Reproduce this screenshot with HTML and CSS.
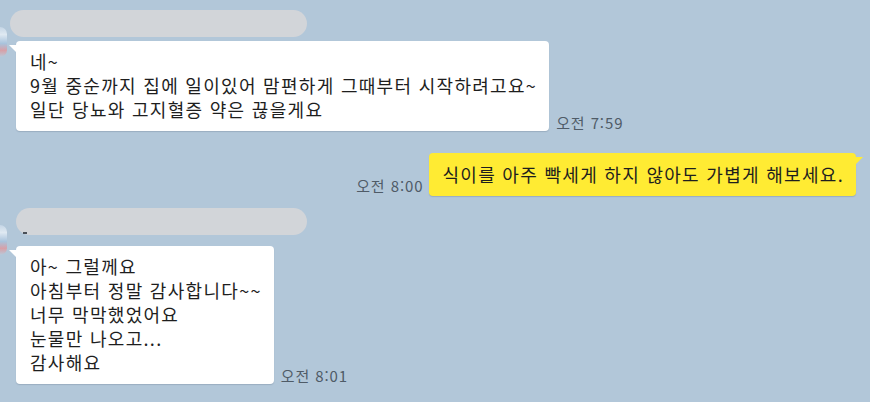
FILE: index.html
```html
<!DOCTYPE html>
<html lang="ko">
<head>
<meta charset="utf-8">
<link rel="stylesheet" href="styles.css">
</head>
<body>
<div class="chat">
  <div class="msg-in">
    <div class="avatar"></div>
    <div class="content">
      <div class="name name-first"></div>
      <div class="row">
        <div class="bubble bubble-in">네~<br>9월 중순까지 집에 일이있어 맘편하게 그때부터 시작하려고요~<br>일단 당뇨와 고지혈증 약은 끊을게요</div>
        <span class="time">오전 7:59</span>
      </div>
    </div>
  </div>

  <div class="msg-out">
    <span class="time">오전 8:00</span>
    <div class="bubble bubble-out">식이를 아주 빡세게 하지 않아도 가볍게 해보세요.</div>
  </div>

  <div class="msg-in msg-second">
    <div class="avatar"></div>
    <div class="content">
      <div class="name name-second"><span class="name-dash"></span></div>
      <div class="row">
        <div class="bubble bubble-in">아~ 그럴께요<br>아침부터 정말 감사합니다~~<br>너무 막막했었어요<br>눈물만 나오고...<br>감사해요</div>
        <span class="time">오전 8:01</span>
      </div>
    </div>
  </div>
</div>
</body>
</html>
```
FILE: styles.css
```css
html, body {
  margin: 0;
  padding: 0;
  background: #b2c7d9;
}
body {
  width: 870px;
  height: 402px;
  overflow: hidden;
  font-family: "Noto Sans CJK KR", "Noto Sans", sans-serif;
  color: #1e1e1e;
}
.chat {
  display: flex;
  flex-direction: column;
  padding-top: 10px;
}
.msg-in {
  display: flex;
  align-items: flex-start;
}
.msg-second {
  margin-top: 12px;
}
.avatar {
  width: 7px;
  height: 30px;
  margin-top: 17px;
  border-radius: 0 8px 8px 0;
  background: linear-gradient(180deg, #c5d6e6 0%, #dfe9f2 25%, #a9c3dc 55%, #d7a0a8 78%, #b9c9d9 100%);
  flex: none;
}
.content {
  display: flex;
  flex-direction: column;
  margin-left: 9px;
}
.name {
  height: 27px;
  border-radius: 14px;
  background: #d2d5d9;
  position: relative;
}
.name-first {
  width: 297px;
  margin-left: -6px;
}
.name-second {
  width: 291px;
}
.name-dash {
  position: absolute;
  left: 7px;
  bottom: 1px;
  width: 4px;
  height: 2px;
  background: #4a5058;
}
.row {
  display: flex;
  align-items: flex-end;
  margin-top: 4px;
}
.msg-second .row {
  margin-top: 11px;
}
.bubble {
  position: relative;
  font-size: 18px;
  letter-spacing: 1.3px;
  line-height: 24px;
  border-radius: 4px;
  white-space: nowrap;
}
.bubble-in {
  background: #ffffff;
  padding: 8px 12px 10px 14px;
  box-shadow: 0 1px 1px rgba(80, 100, 120, 0.25);
}
.bubble-in::before {
  content: "";
  position: absolute;
  left: -7px;
  top: 4px;
  width: 8px;
  height: 8px;
  background: #ffffff;
  clip-path: polygon(0 0, 100% 0, 100% 100%);
}
.time {
  font-size: 15px;
  letter-spacing: 0.9px;
  line-height: 17px;
  color: #4f5b67;
  margin-left: 7px;
  white-space: nowrap;
}
.msg-out {
  display: flex;
  justify-content: flex-end;
  align-items: flex-end;
  margin-top: 22px;
  padding-right: 14px;
}
.msg-out .time {
  margin-left: 0;
  margin-right: 6px;
  margin-bottom: 2px;
}
.bubble-out {
  background: #ffeb33;
  padding: 9px 12px 10px 13px;
  box-shadow: 0 1px 1px rgba(80, 100, 120, 0.25);
}
.bubble-out::after {
  content: "";
  position: absolute;
  right: -7px;
  top: 4px;
  width: 8px;
  height: 8px;
  background: #ffeb33;
  clip-path: polygon(0 0, 100% 0, 0 100%);
}
```
